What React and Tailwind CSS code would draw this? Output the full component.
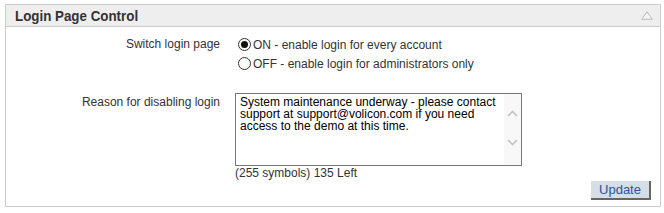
import React from "react";

function Radio({ checked, children }) {
  return (
    <label className="flex items-center h-[19px]">
      <span className="ml-[3px] w-[13px] h-[13px] rounded-full border border-[#333] bg-white flex items-center justify-center">
        {checked && <span className="w-[7px] h-[7px] rounded-full bg-[#111]" />}
      </span>
      <span className="ml-[2px]">{children}</span>
    </label>
  );
}

const reasonLines = [
  "System maintenance underway - please contact",
  "support at support@volicon.com if you need",
  "access to the demo at this time.",
];

export default function App() {
  return (
    <div className="w-[664px] h-[213px] bg-white pt-[4px] pl-[5px] text-[12px] text-[#333] font-['Liberation_Sans',Arial,sans-serif]">
      <div className="w-[656px] h-[203px] border border-[#cccccc] flex flex-col">
        {/* header */}
        <div className="h-[22px] bg-[#eeeeee] border-b border-[#cccccc] flex items-center justify-between pl-[9px] pr-[7px]">
          <span className="inline-block origin-left scale-x-[0.89] text-[15px] leading-[18px] font-bold text-[#333] whitespace-nowrap">
            Login Page Control
          </span>
          <svg width="12" height="9" viewBox="0 0 12 9">
            <path d="M6 0.8 L11.3 8.3 L0.7 8.3 Z" fill="#f4f4f4" stroke="#bbbbbb" strokeWidth="1" />
          </svg>
        </div>

        {/* body */}
        <div className="flex-1 flex flex-col pt-[8px]">
          <div className="flex">
            <div className="w-[214px] text-right pt-[2px] leading-[14px]">Switch login page</div>
            <div className="pl-[15px] flex flex-col leading-[14px]">
              <Radio checked>ON - enable login for every account</Radio>
              <Radio>OFF - enable login for administrators only</Radio>
            </div>
          </div>

          <div className="flex mt-[20px]">
            <div className="w-[214px] text-right pt-[2px] leading-[14px]">Reason for disabling login</div>
            <div className="pl-[15px] flex flex-col">
              <div className="w-[287px] h-[73px] border border-[#777] flex bg-white">
                <div className="w-[268px] shrink-0 overflow-hidden pl-[4px] pt-[2px] text-[12px] leading-[12px] text-black whitespace-nowrap">
                  {reasonLines.map((l) => (
                    <div key={l}>{l}</div>
                  ))}
                </div>
                <div className="w-[17px] bg-[#f8f8f8] flex flex-col items-center pt-[16px]">
                  <svg width="11" height="7" viewBox="0 0 11 7">
                    <path d="M1 6 L5.5 1.5 L10 6" fill="none" stroke="#c2c2c2" strokeWidth="1.6" />
                  </svg>
                  <svg width="11" height="7" viewBox="0 0 11 7" className="mt-[22px]">
                    <path d="M1 1 L5.5 5.5 L10 1" fill="none" stroke="#c2c2c2" strokeWidth="1.6" />
                  </svg>
                </div>
              </div>
              <div className="leading-[14px]">(255 symbols) 135 Left</div>
            </div>
          </div>

          <div className="flex justify-end pr-[9px] mt-[1px]">
            <button className="w-[60px] h-[19px] bg-[#d5dde5] border-r-2 border-b-2 border-[#666] text-[13px] leading-[16px] text-[#2f5496]">
              Update
            </button>
          </div>
        </div>
      </div>
    </div>
  );
}
